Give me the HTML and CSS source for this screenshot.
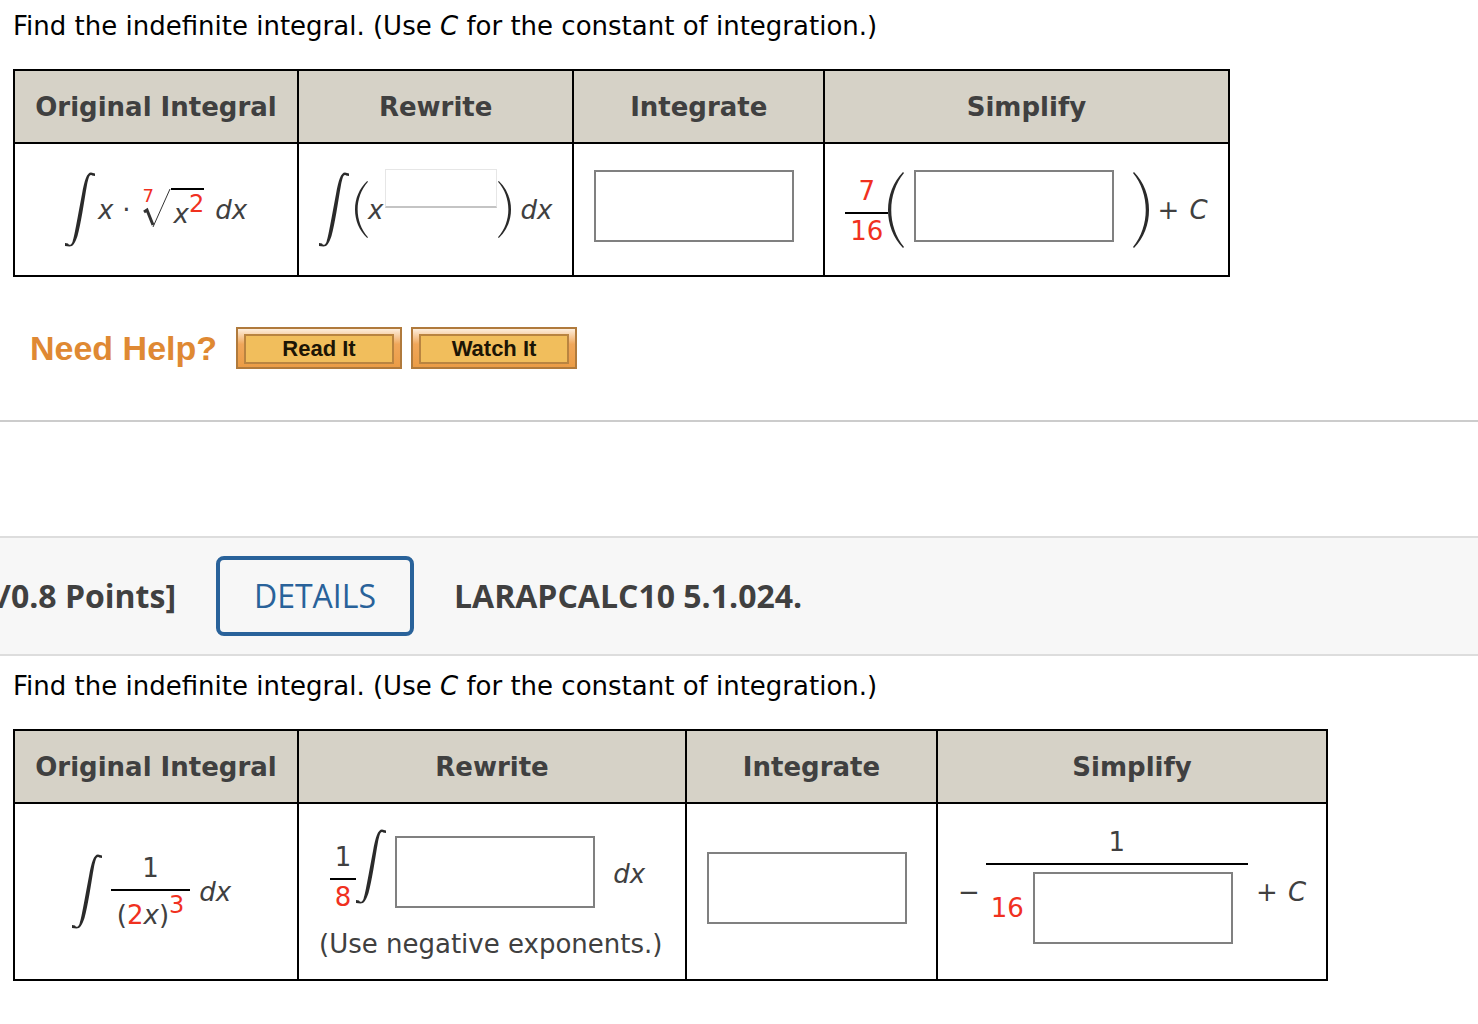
FILE: index.html
```html
<!DOCTYPE html>
<html lang="en">
  <head>
    <meta charset="UTF-8" />
    <meta name="viewport" content="width=device-width, initial-scale=1.0" />
    <title>Indefinite Integrals</title>
    <link rel="stylesheet" href="styles.css">
  </head>
  <body>
    <!-- Shared math symbols -->
    <svg class="symbols" aria-hidden="true">
      <symbol id="integral" viewBox="0 0 31 75" preserveAspectRatio="none">
        <path d="M0 71 L3 71.500 C4 73.500 6 73.500 7.500 70 C10 62 13.500 40 17 22 C19.500 8 22 0.500 26 0.500 L30 1.500 L30 4 L27 3.500 C24.500 1.500 23.500 6 22 13 C19 30 16 52 12.500 64 C10 71.500 8 74.500 4.500 74.500 L0 74 Z" />
      </symbol>
      <symbol id="paren" viewBox="0 0 16 76" preserveAspectRatio="none">
        <path d="M15 0 C-5 20 -5 56 15 76 L16 75 C-1 54 -1 22 16 1 Z" />
      </symbol>
    </svg>

    <!-- Question 1 -->
    <section class="question first">
      <p class="prompt">Find the indefinite integral. (Use <i>C</i> for the constant of integration.)</p>
      <table class="steps">
        <tr>
          <th class="w-original">Original Integral</th>
          <th class="w-rewrite">Rewrite</th>
          <th class="w-integrate">Integrate</th>
          <th class="w-simplify">Simplify</th>
        </tr>
        <tr class="short">
          <td>
            <div class="math">
              <svg class="integral"><use href="#integral" /></svg>
              <i class="after-int">x</i><span class="dot">·</span>
              <span class="root">
                <span class="index red">7</span>
                <svg class="radical" viewBox="0 0 28 40">
                  <path d="M1 24 L4 22 L10 37" class="thick" />
                  <path d="M10 39 L27 1" class="thin" />
                </svg>
                <span class="radicand"><i>x</i><sup class="red">2</sup></span>
              </span>
              <i class="dx">dx</i>
            </div>
          </td>
          <td>
            <div class="math">
              <svg class="integral"><use href="#integral" /></svg>
              <svg class="paren small"><use href="#paren" /></svg>
              <i>x</i>
              <input class="exponent" type="text" aria-label="Exponent of x">
              <svg class="paren small close"><use href="#paren" /></svg>
              <i class="dx">dx</i>
            </div>
          </td>
          <td>
            <div class="math left">
              <input class="answer" type="text" aria-label="Integrate">
            </div>
          </td>
          <td>
            <div class="math">
              <span class="frac">
                <span class="num red">7</span>
                <span class="den red">16</span>
              </span>
              <svg class="paren"><use href="#paren" /></svg>
              <input class="answer in-paren" type="text" aria-label="Simplify">
              <svg class="paren close"><use href="#paren" /></svg>
              <span class="plus-c">+ <i>C</i></span>
            </div>
          </td>
        </tr>
      </table>

      <div class="help">
        <span class="help-label">Need Help?</span>
        <button class="help-button" type="button"><span>Read It</span></button>
        <button class="help-button" type="button"><span>Watch It</span></button>
      </div>
    </section>

    <!-- Question 2 -->
    <header class="question-bar">
      <span class="points">/0.8 Points]</span>
      <button class="details" type="button">DETAILS</button>
      <span class="source">LARAPCALC10 5.1.024.</span>
    </header>

    <section class="question">
      <p class="prompt">Find the indefinite integral. (Use <i>C</i> for the constant of integration.)</p>
      <table class="steps">
        <tr>
          <th class="w-original">Original Integral</th>
          <th class="w-rewrite-wide">Rewrite</th>
          <th class="w-integrate">Integrate</th>
          <th class="w-simplify">Simplify</th>
        </tr>
        <tr class="tall">
          <td>
            <div class="math">
              <svg class="integral"><use href="#integral" /></svg>
              <span class="frac spaced">
                <span class="num">1</span>
                <span class="den">(<span class="red">2</span><i>x</i>)<sup class="red">3</sup></span>
              </span>
              <i class="dx">dx</i>
            </div>
          </td>
          <td class="top">
            <div class="math">
              <span class="frac leading">
                <span class="num">1</span>
                <span class="den red">8</span>
              </span>
              <svg class="integral raised"><use href="#integral" /></svg>
              <input class="answer integrand" type="text" aria-label="Rewrite">
              <i class="dx far">dx</i>
            </div>
            <p class="note">(Use negative exponents.)</p>
          </td>
          <td>
            <div class="math left">
              <input class="answer" type="text" aria-label="Integrate">
            </div>
          </td>
          <td>
            <div class="math">
              <span>−</span>
              <span class="frac answer-frac">
                <span class="num">1</span>
                <span class="den"><span class="red">16</span><input class="answer" type="text" aria-label="Simplify"></span>
              </span>
              <span class="plus-c">+ <i>C</i></span>
            </div>
          </td>
        </tr>
      </table>
    </section>
  </body>
</html>
```
FILE: styles.css
```css
* {
  box-sizing: border-box;
}

body {
  margin: 0;
  background-color: #fff;
  color: #404040;
  font-family: Verdana, "DejaVu Sans", sans-serif;
  font-size: 26px;
  line-height: 32px;
}

p {
  margin: 0;
}

.symbols {
  display: none;
}

.question {
  padding: 14px 13px 20px;
}

.first {
  padding: 10px 13px 51px;
  border-bottom: 2px solid #ccc;
}

.prompt {
  color: #000;
  margin-bottom: 27px;
}

/* Tables */
.steps {
  border-collapse: collapse;
}

.steps th,
.steps td {
  border: 2px solid #000;
  padding: 0 20px;
}

.steps th {
  background-color: #d6d2c7;
  height: 73px;
  white-space: nowrap;
  font-size: 26px;
}

.w-original {
  width: 284px;
}

.w-rewrite {
  width: 275px;
}

.w-rewrite-wide {
  width: 388px;
}

.w-integrate {
  width: 251px;
}

.short td {
  height: 133px;
}

.tall td {
  height: 177px;
}

.steps .top {
  vertical-align: top;
  padding-top: 25px;
}

/* Math */
.math {
  display: flex;
  align-items: center;
  justify-content: center;
  white-space: nowrap;
}

.left {
  justify-content: flex-start;
}

.red {
  color: #f0311f;
}

sup {
  font-size: 24px;
  line-height: 0;
  vertical-align: 11px;
}

.integral {
  width: 31px;
  height: 75px;
  flex: none;
  fill: #2a2a2a;
}

.raised {
  align-self: flex-start;
}

.after-int {
  margin-left: 2px;
}

.dot {
  margin: 0 12px 0 9px;
}

.paren {
  width: 16px;
  height: 76px;
  flex: none;
  fill: #2a2a2a;
}

.small {
  width: 13px;
  height: 57px;
}

.integral + .small {
  margin-left: 5px;
}

.close {
  transform: scaleX(-1);
}

.dx {
  margin-left: 9px;
}

.root + .dx {
  margin-left: 11px;
}

.tall .dx {
  margin-right: 9px;
}

.tall .far {
  margin-left: 18px;
}

.root {
  position: relative;
  display: flex;
  margin-bottom: 4px;
}

.index {
  position: absolute;
  top: -4px;
  left: 0;
  font-size: 18px;
  line-height: 24px;
}

.radical {
  width: 28px;
  height: 40px;
}

.radical path {
  fill: none;
  stroke: #333;
}

.radical .thick {
  stroke-width: 3px;
}

.radical .thin {
  stroke-width: 1px;
}

.radicand {
  border-top: 2px solid #000;
  padding: 8px 0 0 3px;
  height: 40px;
}

.frac {
  display: flex;
  flex-direction: column;
  margin-bottom: 2px;
  text-align: center;
}

.num {
  padding: 4px 0 5px;
  line-height: 32px;
}

.den {
  border-top: 2px solid #000;
  padding: 1px 5px 0;
}

.spaced {
  margin: 0 0 4px 8px;
}

.spaced .den {
  padding: 8px 6px 0;
}

.leading {
  margin: 8px 0 6px;
}

.plus-c {
  margin-left: 8px;
}

.plus-c i {
  margin-left: 2px;
}

.answer {
  width: 200px;
  height: 72px;
  border: 2px solid #808080;
  background-color: #fff;
  font: inherit;
  padding: 0 8px;
  margin: 0 0 7px;
}

.in-paren {
  margin: 0 19px 7px 10px;
}

.integrand {
  align-self: flex-start;
  margin: 7px 0 0 8px;
}

.exponent {
  width: 112px;
  height: 39px;
  border: 1px solid #e6e6e6;
  border-bottom: 2px solid #c4c4c4;
  font: inherit;
  font-size: 22px;
  padding: 0 4px;
  margin: 0 1px 42px 2px;
}

.answer-frac {
  margin: 0 0 8px 6px;
}

.answer-frac .num {
  padding: 0 0 5px;
}

.answer-frac .den {
  display: flex;
  align-items: center;
  padding: 7px 15px 5px 5px;
}

.answer-frac .answer {
  margin: 0 0 0 9px;
}

.note {
  margin-top: 9px;
}

/* Help row */
.help {
  display: flex;
  align-items: center;
  margin: 50px 0 0 17px;
  font-family: Arial, "Liberation Sans", sans-serif;
  font-weight: bold;
}

.help-label {
  color: #df8933;
  font-size: 34px;
  width: 206px;
}

.help-button {
  width: 166px;
  height: 42px;
  margin-right: 9px;
  padding: 5px 6px;
  border: 2px solid #b07a3c;
  background: linear-gradient(#fdeedd, #f0a75a 40%, #eb9c46);
  color: #1c1505;
  font: inherit;
  font-size: 22px;
}

.help-button span {
  display: block;
  border: 2px solid #b98440;
  background-color: #f1be5c;
  line-height: 26px;
}

/* Question bar */
.question-bar {
  display: flex;
  align-items: center;
  margin-top: 114px;
  padding: 18px 0;
  border-top: 2px solid #ddd;
  border-bottom: 2px solid #ddd;
  background-color: #f7f7f7;
  font-family: "Open Sans", sans-serif;
  font-size: 32px;
  font-weight: bold;
}

.points {
  display: flex;
  justify-content: flex-end;
  width: 176px;
  white-space: nowrap;
}

.details {
  min-width: 198px;
  height: 80px;
  margin: 0 40px;
  padding: 0 30px;
  border: 4px solid #29629a;
  border-radius: 8px;
  background-color: #f7f7f7;
  color: #29629a;
  font: inherit;
  font-weight: 500;
}
```
